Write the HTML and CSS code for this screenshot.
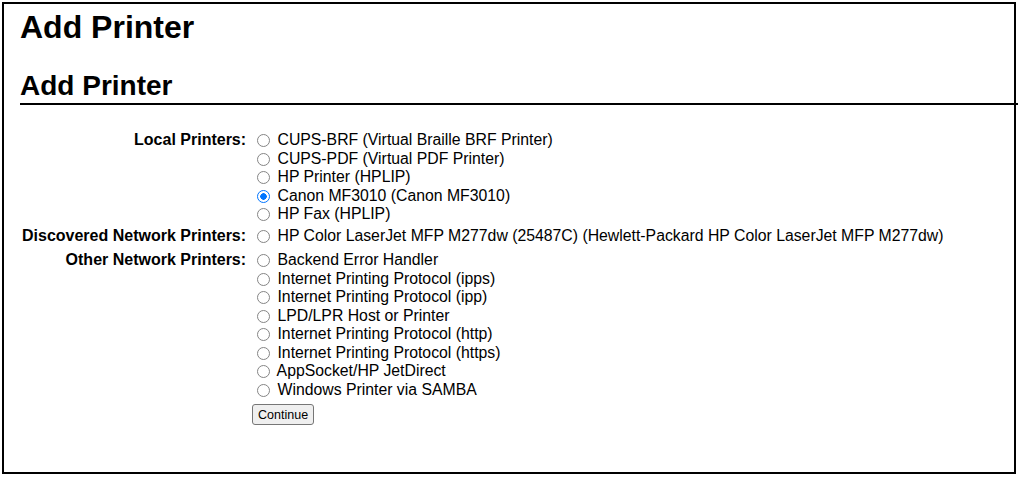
FILE: index.html
```html
<!DOCTYPE html>
<html>
<head>
<meta charset="utf-8">
<title>Add Printer</title>
<link rel="stylesheet" href="styles.css">
</head>
<body>
<div class="frame">
  <h1 class="title">Add Printer</h1>
  <h2 class="section">Add Printer</h2>
  <form class="form">
    <table class="grid">
      <tr>
        <th class="label">Local Printers:</th>
        <td class="opts">
          <label class="opt"><input type="radio" name="p"> CUPS-BRF (Virtual Braille BRF Printer)</label>
          <label class="opt"><input type="radio" name="p"> CUPS-PDF (Virtual PDF Printer)</label>
          <label class="opt"><input type="radio" name="p"> HP Printer (HPLIP)</label>
          <label class="opt"><input type="radio" name="p" checked> Canon MF3010 (Canon MF3010)</label>
          <label class="opt"><input type="radio" name="p"> HP Fax (HPLIP)</label>
        </td>
      </tr>
      <tr class="discovered">
        <th class="label">Discovered Network Printers:</th>
        <td class="opts">
          <label class="opt"><input type="radio" name="p"> HP Color LaserJet MFP M277dw (25487C) (Hewlett-Packard HP Color LaserJet MFP M277dw)</label>
        </td>
      </tr>
      <tr>
        <th class="label">Other Network Printers:</th>
        <td class="opts">
          <label class="opt"><input type="radio" name="p"> Backend Error Handler</label>
          <label class="opt"><input type="radio" name="p"> Internet Printing Protocol (ipps)</label>
          <label class="opt"><input type="radio" name="p"> Internet Printing Protocol (ipp)</label>
          <label class="opt"><input type="radio" name="p"> LPD/LPR Host or Printer</label>
          <label class="opt"><input type="radio" name="p"> Internet Printing Protocol (http)</label>
          <label class="opt"><input type="radio" name="p"> Internet Printing Protocol (https)</label>
          <label class="opt"><input type="radio" name="p"> AppSocket/HP JetDirect</label>
          <label class="opt"><input type="radio" name="p"> Windows Printer via SAMBA</label>
        </td>
      </tr>
      <tr>
        <td></td>
        <td class="actions"><button type="button" class="btn">Continue</button></td>
      </tr>
    </table>
  </form>
</div>
</body>
</html>
```

FILE: styles.css
```css
html, body {
  margin: 0;
  padding: 0;
  background: #fff;
}

body {
  font-family: "Liberation Sans", Arial, sans-serif;
  color: #000;
}

.frame {
  box-sizing: border-box;
  width: 1014px;
  height: 472px;
  margin: 2px;
  border: 2px solid #000;
  padding: 5px 0 0 16px;
}

.title {
  margin: 0;
  font-size: 32px;
  line-height: 36px;
  font-weight: bold;
}

.section {
  margin: 25px -4px 0 0;
  font-size: 28px;
  line-height: 32px;
  font-weight: bold;
  padding-bottom: 1px;
  border-bottom: 2px solid #000;
}

.form {
  margin: 0;
  padding-top: 24px;
}

.grid {
  border-collapse: separate;
  border-spacing: 0;
}

.label {
  text-align: right;
  vertical-align: top;
  font-size: 16px;
  font-weight: bold;
  line-height: 18.5px;
  padding: 2px 4px 2px 2px;
  white-space: nowrap;
}

.opts {
  vertical-align: top;
  font-size: 15.8px;
  line-height: 18.5px;
  padding: 2px 2px;
}

.discovered .label,
.discovered .opts {
  padding-top: 1px;
  padding-bottom: 4px;
}

.opt {
  display: block;
  white-space: nowrap;
}

.opt input {
  -webkit-appearance: none;
  appearance: none;
  box-sizing: border-box;
  margin: 3px 3px 0 5px;
  width: 13px;
  height: 13px;
  border: 1.5px solid #858585;
  border-radius: 50%;
  background: #fff;
  vertical-align: -2px;
}

.opt input:checked {
  border-color: #0075ff;
  background: radial-gradient(circle, #0075ff 0 3px, #fff 3.5px);
}

.actions {
  padding: 3px 2px;
}

.btn {
  font-family: "Liberation Sans", Arial, sans-serif;
  font-size: 12.5px;
  padding: 2px 5px;
  border: 1px solid #767676;
  border-radius: 3px;
  background: #efefef;
  color: #000;
  height: 21px;
}
```
